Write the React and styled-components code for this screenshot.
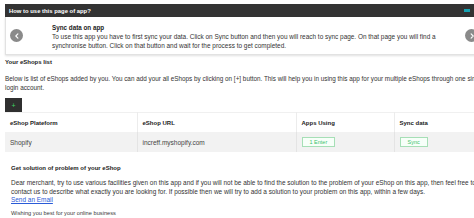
import React from "react";
import styled, { createGlobalStyle } from "styled-components";

const Global = createGlobalStyle`
  html, body { margin: 0; padding: 0; background: #fff; overflow: hidden; }
  body { font-family: "Liberation Sans", Arial, Helvetica, sans-serif; color: #333; }
`;

const Page = styled.div`
  width: 482px;
  padding: 4px 0 0 5px;
  box-sizing: border-box;
`;

const HelpBar = styled.div`
  height: 13px;
  background: #333333;
  color: #fff;
  font-size: 5.9px;
  font-weight: 700;
  display: flex;
  align-items: center;
  justify-content: space-between;
  padding: 0 0 0 4px;
`;

const HelpBadge = styled.span`
  width: 6px;
  height: 3px;
  background: #16a2b2;
  margin-right: 12px;
`;

const Carousel = styled.div`
  border: 1px solid #e2e2e2;
  border-top: none;
  box-shadow: 0 1px 2px rgba(0, 0, 0, 0.12);
  height: 37px;
  display: flex;
  align-items: center;
  padding: 0 3px 0 4px;
`;

const ArrowBtn = styled.span`
  flex: none;
  width: 13px;
  height: 13px;
  border-radius: 50%;
  background: #8a8a8a;
  display: flex;
  align-items: center;
  justify-content: center;
`;

const Slide = styled.div`
  flex: 1;
  align-self: flex-start;
  margin-top: 6px;
  padding: 0 13px 0 29px;
`;

const SlideTitle = styled.div`
  font-size: 6.3px;
  font-weight: 700;
  color: #222;
  line-height: 9px;
  margin-bottom: 1px;
`;

const SlideText = styled.div`
  font-size: 6.45px;
  line-height: 8.5px;
  color: #333;
`;

const SectionTitle = styled.div`
  font-size: 6px;
  font-weight: 700;
  color: #222;
  margin-top: 3px;
  line-height: 9px;
`;

const Intro = styled.p`
  margin: 7px 0 0;
  width: 492px;
  font-size: 6.35px;
  line-height: 9px;
  color: #333;
`;

const AddButton = styled.div`
  width: 17px;
  height: 14px;
  background: #2f2f2f;
  display: flex;
  align-items: center;
  justify-content: center;
  color: #3ecf62;
  font-size: 7px;
  line-height: 1;
  margin-top: 6px;
`;

const Table = styled.table`
  border-collapse: collapse;
  width: 500px;
  table-layout: fixed;
  border-top: 1px solid #f0f0f0;
`;

const Th = styled.th`
  text-align: left;
  font-size: 6px;
  font-weight: 700;
  color: #222;
  height: 19px;
  padding: 0 0 0 5px;
  border-left: 1px solid #ececec;
  &:first-child { border-left: none; }
`;

const Tr = styled.tr`
  background: ${(p) => (p.$shade ? "#f2f2f2" : "#fff")};
`;

const Td = styled.td`
  height: 20px;
  padding: 0 0 0 5px;
  font-size: 6.5px;
  color: #444;
  border-left: 1px solid #e4e4e4;
  &:first-child { border-left: none; }
`;

const GreenBtn = styled.span`
  display: inline-block;
  box-sizing: border-box;
  height: 10px;
  line-height: 8px;
  padding: 0 7px;
  border: 1px solid #a6dfb6;
  background: #f7fff9;
  color: #40bf6b;
  font-size: 5.5px;
  vertical-align: middle;
`;

const Help = styled.div`
  padding: 12px 6px 0 6px;
`;

const HelpTitle = styled.div`
  font-size: 6px;
  font-weight: 700;
  color: #222;
  line-height: 9px;
  margin-bottom: 4.5px;
`;

const HelpText = styled.p`
  margin: 0;
  width: 475px;
  font-size: 6.45px;
  line-height: 9px;
  color: #333;
`;

const MailLink = styled.a`
  font-size: 6.45px;
  line-height: 8.5px;
  color: #2a5bd7;
  text-decoration: underline;
  display: block;
`;

const Wish = styled.div`
  margin-top: 4.5px;
  font-size: 5.7px;
  line-height: 9px;
  color: #3a3a3a;
`;

const Chevron = ({ dir }) => (
  <svg width="6" height="6" viewBox="0 0 10 10">
    <path
      d={dir === "left" ? "M6.5 1.5 L3 5 L6.5 8.5" : "M3.5 1.5 L7 5 L3.5 8.5"}
      fill="none"
      stroke="#fff"
      strokeWidth="1.8"
      strokeLinecap="round"
      strokeLinejoin="round"
    />
  </svg>
);

export default function App() {
  return (
    <>
      <Global />
      <Page>
        <HelpBar>
          <span>How to use this page of app?</span>
          <HelpBadge />
        </HelpBar>
        <Carousel>
          <ArrowBtn><Chevron dir="left" /></ArrowBtn>
          <Slide>
            <SlideTitle>Sync data on app</SlideTitle>
            <SlideText>
              To use this app you have to first sync your data. Click on Sync button and then you will reach to sync page. On that page you will find a synchronise button. Click on that button and wait for the process to get completed.
            </SlideText>
          </Slide>
          <ArrowBtn><Chevron dir="right" /></ArrowBtn>
        </Carousel>
        <SectionTitle>Your eShops list</SectionTitle>
        <Intro>
          Below is list of eShops added by you. You can add your all eShops by clicking on [+] button. This will help you in using this app for your multiple eShops through one single login account.
        </Intro>
        <AddButton>+</AddButton>
        <Table>
          <colgroup>
            <col style={{ width: 132 }} />
            <col style={{ width: 159 }} />
            <col style={{ width: 98 }} />
            <col />
          </colgroup>
          <thead>
            <tr>
              <Th>eShop Plateform</Th>
              <Th>eShop URL</Th>
              <Th>Apps Using</Th>
              <Th>Sync data</Th>
            </tr>
          </thead>
          <tbody>
            <Tr $shade>
              <Td>Shopify</Td>
              <Td>increff.myshopify.com</Td>
              <Td><GreenBtn>1 Enter</GreenBtn></Td>
              <Td><GreenBtn>Sync</GreenBtn></Td>
            </Tr>
          </tbody>
        </Table>
        <Help>
          <HelpTitle>Get solution of problem of your eShop</HelpTitle>
          <HelpText>
            Dear merchant, try to use various facilities given on this app and if you will not be able to find the solution to the problem of your eShop on this app, then feel free to contact us to describe what exactly you are looking for. If possible then we will try to add a solution to your problem on this app, within a few days.
          </HelpText>
          <MailLink href="#">Send an Email</MailLink>
          <Wish>Wishing you best for your online business</Wish>
        </Help>
      </Page>
    </>
  );
}
